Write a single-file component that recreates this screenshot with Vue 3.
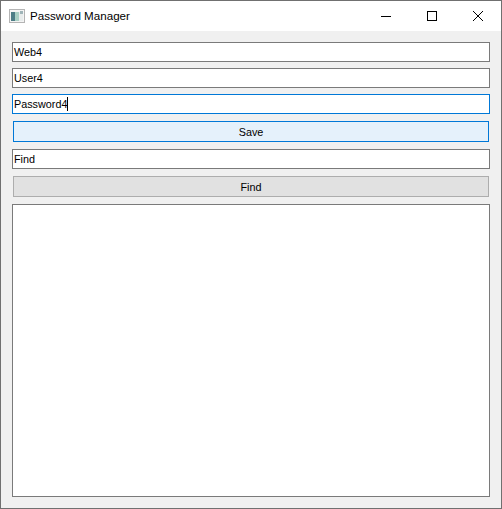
<script setup>
const fields = ['Web4', 'User4']
</script>

<template>
  <div class="window">
    <header class="titlebar">
      <svg class="app-icon" width="16" height="16" viewBox="0 0 16 16">
        <rect x="0.5" y="1.5" width="15" height="13" fill="#f4f4f4" stroke="#b4b4b4" />
        <rect x="2" y="4" width="4" height="9" fill="#4d7d86" />
        <rect x="6" y="4" width="4" height="9" fill="#a9cfc4" />
        <rect x="10" y="4" width="4" height="9" fill="#e8ecec" />
        <rect x="11" y="3" width="3" height="3" fill="#9fb4b8" />
      </svg>
      <span class="title">Password Manager</span>
      <div class="controls">
        <div class="ctl">
          <svg width="12" height="12" viewBox="0 0 12 12"><path d="M1 6.5H11" stroke="#000" fill="none" /></svg>
        </div>
        <div class="ctl">
          <svg width="12" height="12" viewBox="0 0 12 12"><rect x="1.5" y="1.5" width="9" height="9" stroke="#000" fill="none" /></svg>
        </div>
        <div class="ctl">
          <svg width="12" height="12" viewBox="0 0 12 12"><path d="M1 1L11 11M11 1L1 11" stroke="#000" fill="none" /></svg>
        </div>
      </div>
    </header>
    <main class="body">
      <div v-for="f in fields" :key="f" class="field">{{ f }}</div>
      <div class="field focused">Password4<span class="caret"></span></div>
      <div class="btn active">Save</div>
      <div class="field find">Find</div>
      <div class="btn">Find</div>
      <div class="list"></div>
    </main>
  </div>
</template>

<style scoped>
.window {
  box-sizing: border-box;
  width: 502px;
  height: 509px;
  border: 1px solid #707070;
  display: flex;
  flex-direction: column;
  background: #f0f0f0;
  font-family: "Liberation Sans", Arial, sans-serif;
  font-size: 10.8px;
  color: #000;
}
.titlebar {
  height: 30px;
  flex: none;
  background: #fff;
  display: flex;
  align-items: center;
  padding-left: 8px;
}
.app-icon { flex: none; }
.title {
  margin-left: 5px;
  font-size: 11.6px;
  line-height: 30px;
  height: 30px;
}
.controls {
  margin-left: auto;
  display: flex;
}
.ctl {
  width: 46px;
  height: 30px;
  display: flex;
  align-items: center;
  justify-content: center;
}
.body {
  flex: 1;
  display: flex;
  flex-direction: column;
  padding: 11px;
}
.field {
  box-sizing: border-box;
  height: 20px;
  flex: none;
  background: #fff;
  border: 1px solid #7a7a7a;
  padding-left: 1px;
  line-height: 19px;
  margin-bottom: 6px;
  white-space: nowrap;
}
.focused {
  border-color: #0078d7;
  margin-bottom: 7px;
}
.find { margin-bottom: 7px; }
.caret {
  display: inline-block;
  width: 1px;
  height: 14px;
  background: #000;
  vertical-align: -3px;
}
.btn {
  box-sizing: border-box;
  height: 21px;
  flex: none;
  margin: 0 1px 7px;
  background: #e1e1e1;
  border: 1px solid #adadad;
  text-align: center;
  line-height: 20px;
}
.active {
  background: #e5f1fb;
  border-color: #0078d7;
}
.list {
  flex: 1;
  background: #fff;
  border: 1px solid #7a7a7a;
}
</style>
